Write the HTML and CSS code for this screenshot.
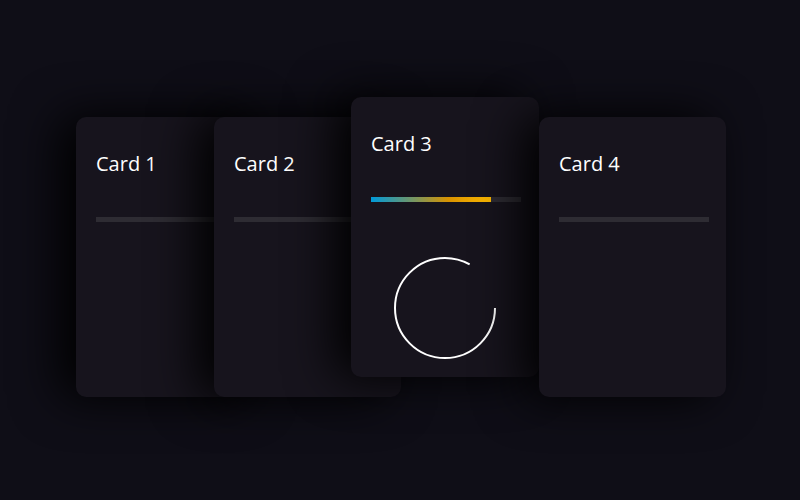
FILE: index.html
```html
<!DOCTYPE html>
<html lang="en">
<head>
<meta charset="utf-8">
<title>Cards</title>
<link rel="stylesheet" href="styles.css">
</head>
<body>
<section class="card-list">
  <article class="card">
    <h2 class="card-title">Card 1</h2>
    <div class="bar"><div class="bar-fill"></div></div>
  </article>
  <article class="card">
    <h2 class="card-title">Card 2</h2>
    <div class="bar"><div class="bar-fill"></div></div>
  </article>
  <article class="card card--active">
    <h2 class="card-title">Card 3</h2>
    <div class="bar"><div class="bar-fill bar-fill--active"></div></div>
    <svg class="ring" width="104" height="104" viewBox="0 0 104 104">
      <circle cx="52" cy="52" r="50" class="ring-stroke"/>
    </svg>
  </article>
  <article class="card card--pushed">
    <h2 class="card-title">Card 4</h2>
    <div class="bar"><div class="bar-fill"></div></div>
  </article>
</section>
</body>
</html>
```
FILE: styles.css
```css
html, body {
  margin: 0;
  padding: 0;
  background: #0f0e17;
  height: 100%;
}
body {
  font-family: "Open Sans", "Noto Sans", sans-serif;
  overflow: hidden;
}
.card-list {
  display: flex;
  align-items: flex-start;
  padding: 117px 0 0 76px;
}
.card {
  box-sizing: border-box;
  flex: 0 0 187px;
  width: 187px;
  height: 280px;
  padding: 33px 20px 0;
  border-radius: 10px;
  background: #17141d;
  box-shadow: -1rem 0 3rem #000;
  display: flex;
  flex-direction: column;
}
.card + .card {
  margin-left: -49px;
}
.card.card--active {
  margin-top: -20px;
  margin-left: -50px;
  flex-basis: 188px;
  width: 188px;
}
.card.card--pushed {
  margin-left: 0;
}
.card-title {
  margin: 0;
  font-size: 20px;
  line-height: 27px;
  font-weight: 400;
  color: #fff;
}
.bar {
  margin-top: 40px;
  width: 150px;
  height: 5px;
  background: #2e2c33;
  overflow: hidden;
}
.bar-fill {
  width: 0;
  height: 100%;
}
.bar-fill--active {
  width: 120px;
  background: linear-gradient(90deg, rgb(0,154,217) 0%, rgb(217,147,0) 65%, rgb(255,186,0) 100%);
}
.ring {
  display: block;
  margin: 54px auto 0;
}
.ring-stroke {
  fill: none;
  stroke: #fff;
  stroke-width: 2;
  stroke-dasharray: 261 400;
}
```
